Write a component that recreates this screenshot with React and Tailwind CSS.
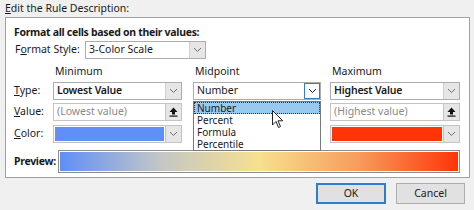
import React from "react";

const font = { fontFamily: '"Segoe UI", "Noto Sans", "Open Sans", sans-serif' };

function Chevron({ color = "#6d6d6d" }) {
  return (
    <svg width="9" height="6" viewBox="0 0 9 6">
      <path d="M1 1 L4.5 4.5 L8 1" fill="none" stroke={color} strokeWidth="1" />
    </svg>
  );
}

function Select({ text, w, bold, focused }) {
  return (
    <div
      className="flex h-[18px] items-stretch border border-[#adadad] bg-white"
      style={{ width: w }}
    >
      <div className={`flex flex-1 items-center pl-[3px] text-[10.5px] text-[#1a1a1a] ${bold ? "font-semibold tracking-[-0.2px]" : ""}`}>
        {text}
      </div>
      {focused ? (
        <div className="flex w-[16px] items-center justify-center border border-[#3a7bbf] bg-white">
          <Chevron color="#1a1a1a" />
        </div>
      ) : (
        <div className="flex w-[16px] items-center justify-center border-l border-[#cfcfcf] bg-[#e6e6e6]">
          <Chevron />
        </div>
      )}
    </div>
  );
}

function ValueInput({ text, w }) {
  return (
    <div className="flex h-[18px] items-stretch border border-[#c4c4c4] bg-white" style={{ width: w }}>
      <div className="flex flex-1 items-center pl-[3px] text-[10.5px] text-[#8a8a8a]">{text}</div>
      <div className="flex w-[16px] items-center justify-center border-l border-[#c4c4c4] bg-[#e6e6e6]">
        <svg width="9" height="10" viewBox="0 0 9 10">
          <path d="M4.5 0.5 L8.5 5 L6 5 L6 7.5 L3 7.5 L3 5 L0.5 5 Z" fill="#111" />
          <rect x="0.5" y="8.5" width="8" height="1.2" fill="#111" />
        </svg>
      </div>
    </div>
  );
}

function ColorPick({ color, w }) {
  return (
    <div className="flex h-[18px] items-stretch border border-[#c4c4c4] bg-white" style={{ width: w }}>
      <div className="flex-1 p-[1px]">
        <div className="h-full w-full" style={{ background: color }} />
      </div>
      <div className="flex w-[16px] items-center justify-center border-l border-[#c4c4c4] bg-[#e6e6e6]">
        <Chevron />
      </div>
    </div>
  );
}

export default function App() {
  return (
    <div className="relative h-[210px] w-[474px] overflow-hidden bg-[#f0f0f0] text-[#1a1a1a]" style={font}>
      <div className="h-[17px] pl-[5px] pt-[1px] text-[10.5px] leading-[15px]">
        <span className="underline">E</span>dit the Rule Description:
      </div>
      <div className="ml-[5px] h-[161px] w-[465px] border border-[#a0a0a0] bg-white pl-[8px]">
        <div className="pt-[7px] text-[10.5px] font-bold leading-[14px] tracking-[-0.3px]">Format all cells based on their values:</div>
        <div className="mt-[2px] flex items-center">
          <div className="w-[71px] pl-[1px] text-[10.5px]">
            F<span className="underline">o</span>rmat Style:
          </div>
          <Select text="3-Color Scale" w={121} />
        </div>
        <div className="mt-[5px] flex h-[14px] items-center text-[10.5px] leading-[14px]">
          <div className="w-[41px]" />
          <div className="w-[140px]">Minimum</div>
          <div className="w-[137px]">Midpoint</div>
          <div>Maximum</div>
        </div>
        <div className="mt-[4px] flex items-center text-[10.5px]">
          <div className="w-[39px]">
            <span className="underline">T</span>ype:
          </div>
          <Select text="Lowest Value" w={129} bold />
          <div className="w-[11px]" />
          <Select text="Number" w={128} focused />
          <div className="w-[9px]" />
          <Select text="Highest Value" w={130} bold />
        </div>
        <div className="mt-[3px] flex items-center text-[10.5px]">
          <div className="w-[39px]">
            <span className="underline">V</span>alue:
          </div>
          <ValueInput text="(Lowest value)" w={129} />
          <div className="w-[11px]" />
          <div className="w-[128px]" />
          <div className="w-[9px]" />
          <ValueInput text="(Highest value)" w={130} />
        </div>
        <div className="mt-[4px] flex items-center text-[10.5px]">
          <div className="w-[39px]">
            <span className="underline">C</span>olor:
          </div>
          <ColorPick color="#5f8ff7" w={129} />
          <div className="w-[11px]" />
          <div className="w-[128px]" />
          <div className="w-[9px]" />
          <ColorPick color="#ff3508" w={130} />
        </div>
        <div className="mt-[7px] flex items-center">
          <div className="w-[44px] text-[10.5px] font-bold tracking-[-0.3px]">Preview:</div>
          <div className="h-[23px] w-[402px] border border-[#8c8c8c] p-[1px]">
            <div
              className="h-full w-full"
              style={{ background: "linear-gradient(to right, #5f8ff7 0%, #c3c6c6 25%, #f7e08f 50%, #f79c5c 75%, #ff3508 100%)" }}
            />
          </div>
        </div>
      </div>
      <div className="mt-[5px] flex justify-end pr-[9px]">
        <div className="flex h-[21px] w-[70px] items-center justify-center border-2 border-[#2d7dd0] bg-[#e1e1e1] text-[10.5px]">OK</div>
        <div className="ml-[10px] flex h-[21px] w-[69px] items-center justify-center border border-[#adadad] bg-[#e1e1e1] text-[10.5px]">Cancel</div>
      </div>

      {/* dropdown list */}
      <div className="absolute left-[193px] top-[101px] w-[128px] border border-[#7a7a7a] bg-white text-[10px] leading-[12px]">
        <div className="flex h-[12px] items-center overflow-hidden border border-dotted border-[#333] bg-[#99c9ef] pl-[2px] leading-[10px]">Number</div>
        <div className="flex h-[12px] items-center overflow-hidden pl-[3px] leading-[12px]">Percent</div>
        <div className="flex h-[12px] items-center overflow-hidden pl-[3px] leading-[12px]">Formula</div>
        <div className="flex h-[12px] items-center overflow-hidden pl-[3px] leading-[12px]">Percentile</div>
      </div>

      {/* mouse cursor */}
      <svg className="absolute left-[272px] top-[110px]" width="12" height="19" viewBox="0 0 12 19">
        <path d="M0.5 0.5 L0.5 15 L4 11.5 L6.5 17.5 L8.5 16.5 L6 10.8 L10.8 10.8 Z" fill="#fff" stroke="#222" strokeWidth="1" strokeLinejoin="round" />
      </svg>
    </div>
  );
}
